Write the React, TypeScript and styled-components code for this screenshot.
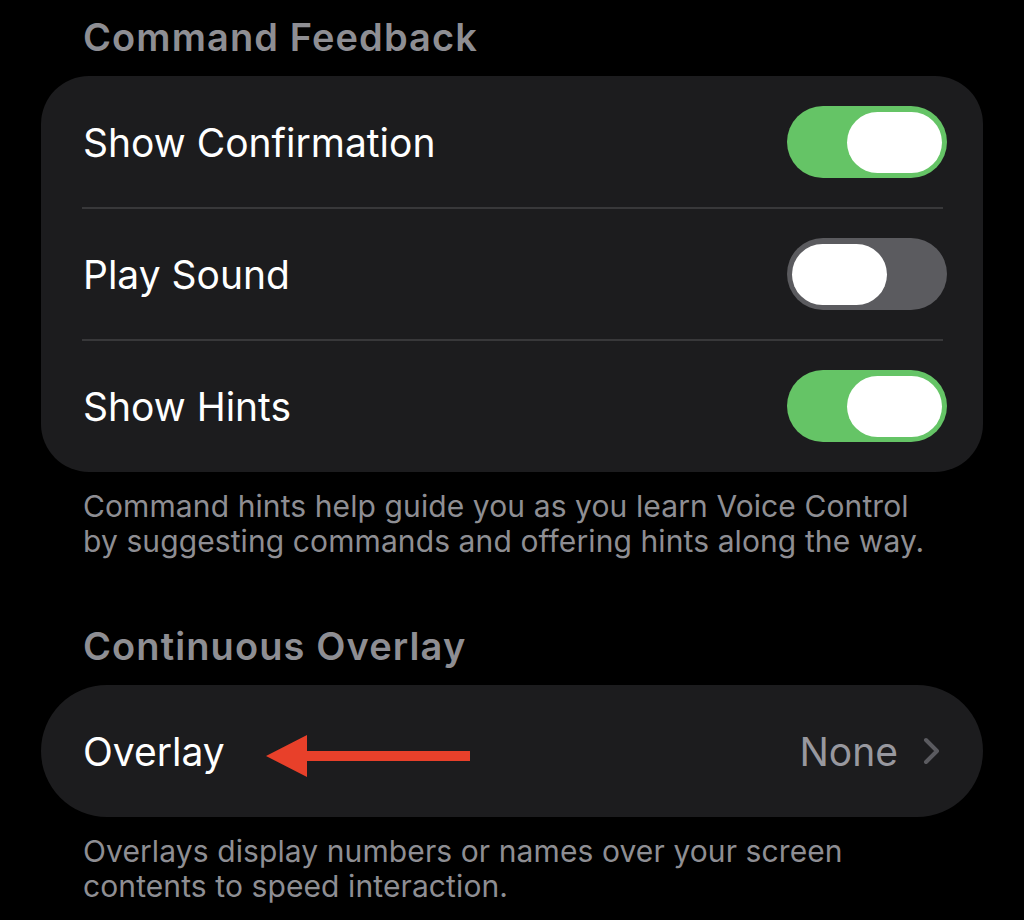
import React from 'react';
import styled, { createGlobalStyle } from 'styled-components';

const GlobalStyle = createGlobalStyle`
  html, body {
    margin: 0;
    padding: 0;
    background: #000;
  }
  body {
    font-family: Inter, "Noto Sans", "Liberation Sans", sans-serif;
    -webkit-font-smoothing: antialiased;
  }
`;

const Page = styled.div`
  width: 1024px;
  height: 920px;
  overflow: hidden;
  background: #000;
  padding: 0 41px;
  box-sizing: border-box;
`;

const SectionHeader = styled.div<{ $top: number }>`
  margin-top: ${p => p.$top}px;
  padding-left: 42px;
  font-size: 38px;
  line-height: 44px;
  font-weight: 600;
  color: #8e8e93;
  letter-spacing: 1.1px;
  height: 44px;
`;

const Card = styled.div<{ $pill?: boolean; $top: number }>`
  margin-top: ${p => p.$top}px;
  background: #1c1c1e;
  border-radius: ${p => (p.$pill ? '66px' : '48px')};
  overflow: hidden;
`;

const Row = styled.div<{ $divider?: boolean }>`
  position: relative;
  height: 132px;
  display: flex;
  align-items: center;
  justify-content: space-between;
  padding: 0 36px 0 42px;
  box-sizing: border-box;
  ${p =>
    p.$divider &&
    `
    &::after {
      content: '';
      position: absolute;
      left: 41px;
      right: 40px;
      bottom: -1px;
      height: 2px;
      background: #38383a;
    }
  `}
`;

const Label = styled.span`
  font-size: 39px;
  color: #fff;
  letter-spacing: 0px;
`;

const Track = styled.div<{ $on: boolean }>`
  width: 160px;
  height: 72px;
  border-radius: 36px;
  background: ${p => (p.$on ? '#65c466' : '#5b5b5f')};
  display: flex;
  align-items: center;
  justify-content: ${p => (p.$on ? 'flex-end' : 'flex-start')};
  padding: 0 5px;
  box-sizing: border-box;
`;

const Knob = styled.div`
  width: 95px;
  height: 61px;
  border-radius: 31px;
  background: #fff;
`;

const Footer = styled.div`
  padding: 17px 20px 0 42px;
  font-size: 30px;
  line-height: 35px;
  color: #8e8e93;
  letter-spacing: 0.1px;
  white-space: nowrap;
`;

const Left = styled.div`
  display: flex;
  align-items: center;
  gap: 41px;
`;

const Right = styled.div`
  display: flex;
  align-items: center;
  gap: 25px;
  margin-right: 7px;
`;

const Value = styled.span`
  font-size: 39px;
  color: #98989f;
  letter-spacing: 0px;
`;

const Toggle = ({ on }: { on: boolean }) => (
  <Track $on={on}>
    <Knob />
  </Track>
);

const Arrow = () => (
  <svg width="205" height="42" viewBox="0 0 205 42" style={{ marginTop: 10 }}>
    <polygon points="0,21 41,0 41,16 204,16 204,26 41,26 41,42" fill="#e8402a" />
  </svg>
);

const Chevron = () => (
  <svg width="17" height="28" viewBox="0 0 17 28">
    <path d="M3 3 L14 14 L3 25" stroke="#5b5b60" strokeWidth="4" fill="none" strokeLinecap="round" strokeLinejoin="round" />
  </svg>
);

export default function App() {
  return (
    <Page>
      <GlobalStyle />
      <SectionHeader $top={15}>Command Feedback</SectionHeader>
      <Card $top={17}>
        <Row $divider>
          <Label>Show Confirmation</Label>
          <Toggle on />
        </Row>
        <Row $divider>
          <Label>Play Sound</Label>
          <Toggle on={false} />
        </Row>
        <Row>
          <Label>Show Hints</Label>
          <Toggle on />
        </Row>
      </Card>
      <Footer>
        Command hints help guide you as you learn Voice Control
        <br />
        by suggesting commands and offering hints along the way.
      </Footer>
      <SectionHeader $top={65}>Continuous Overlay</SectionHeader>
      <Card $pill $top={17}>
        <Row>
          <Left>
            <Label>Overlay</Label>
            <Arrow />
          </Left>
          <Right>
            <Value>None</Value>
            <Chevron />
          </Right>
        </Row>
      </Card>
      <Footer>
        Overlays display numbers or names over your screen
        <br />
        contents to speed interaction.
      </Footer>
    </Page>
  );
}
